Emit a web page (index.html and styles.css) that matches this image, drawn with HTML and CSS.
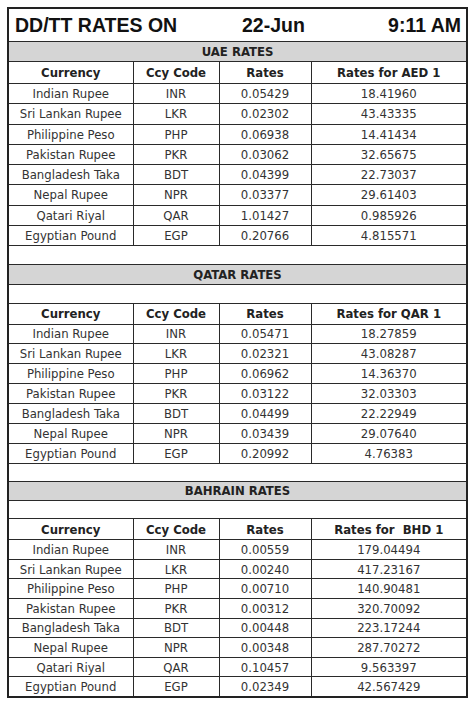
FILE: index.html
```html
<!DOCTYPE html>
<html>
<head>
<meta charset="utf-8">
<link rel="stylesheet" href="styles.css">
</head>
<body>
<table class="rates">
  <colgroup>
    <col class="c1"><col class="c2"><col class="c3"><col class="c4">
  </colgroup>
  <tbody class="top">
  <tr class="title-row">
    <td colspan="4">
      <div class="title">
        <span class="t-left">DD/TT RATES ON</span>
        <span class="t-date">22-Jun</span>
        <span class="t-time">9:11 AM</span>
      </div>
    </td>
  </tr>
  </tbody>

  <tbody class="uae">
  <tr class="sec"><td colspan="4">UAE RATES</td></tr>
  <tr class="head"><th>Currency</th><th>Ccy Code</th><th>Rates</th><th>Rates for AED 1</th></tr>
  <tr><td>Indian Rupee</td><td>INR</td><td>0.05429</td><td>18.41960</td></tr>
  <tr><td>Sri Lankan Rupee</td><td>LKR</td><td>0.02302</td><td>43.43335</td></tr>
  <tr><td>Philippine Peso</td><td>PHP</td><td>0.06938</td><td>14.41434</td></tr>
  <tr><td>Pakistan Rupee</td><td>PKR</td><td>0.03062</td><td>32.65675</td></tr>
  <tr><td>Bangladesh Taka</td><td>BDT</td><td>0.04399</td><td>22.73037</td></tr>
  <tr><td>Nepal Rupee</td><td>NPR</td><td>0.03377</td><td>29.61403</td></tr>
  <tr><td>Qatari Riyal</td><td>QAR</td><td>1.01427</td><td>0.985926</td></tr>
  <tr><td>Egyptian Pound</td><td>EGP</td><td>0.20766</td><td>4.815571</td></tr>
  <tr class="blank"><td colspan="4"></td></tr>
  </tbody>

  <tbody class="qatar">
  <tr class="sec"><td colspan="4">QATAR RATES</td></tr>
  <tr class="blank"><td colspan="4"></td></tr>
  <tr class="head"><th>Currency</th><th>Ccy Code</th><th>Rates</th><th>Rates for QAR 1</th></tr>
  <tr><td>Indian Rupee</td><td>INR</td><td>0.05471</td><td>18.27859</td></tr>
  <tr><td>Sri Lankan Rupee</td><td>LKR</td><td>0.02321</td><td>43.08287</td></tr>
  <tr><td>Philippine Peso</td><td>PHP</td><td>0.06962</td><td>14.36370</td></tr>
  <tr><td>Pakistan Rupee</td><td>PKR</td><td>0.03122</td><td>32.03303</td></tr>
  <tr><td>Bangladesh Taka</td><td>BDT</td><td>0.04499</td><td>22.22949</td></tr>
  <tr><td>Nepal Rupee</td><td>NPR</td><td>0.03439</td><td>29.07640</td></tr>
  <tr><td>Egyptian Pound</td><td>EGP</td><td>0.20992</td><td>4.76383</td></tr>
  <tr class="blank"><td colspan="4"></td></tr>
  </tbody>

  <tbody class="bahrain">
  <tr class="sec"><td colspan="4">BAHRAIN RATES</td></tr>
  <tr class="blank"><td colspan="4"></td></tr>
  <tr class="head"><th>Currency</th><th>Ccy Code</th><th>Rates</th><th>Rates for &nbsp;BHD 1</th></tr>
  <tr><td>Indian Rupee</td><td>INR</td><td>0.00559</td><td>179.04494</td></tr>
  <tr><td>Sri Lankan Rupee</td><td>LKR</td><td>0.00240</td><td>417.23167</td></tr>
  <tr><td>Philippine Peso</td><td>PHP</td><td>0.00710</td><td>140.90481</td></tr>
  <tr><td>Pakistan Rupee</td><td>PKR</td><td>0.00312</td><td>320.70092</td></tr>
  <tr><td>Bangladesh Taka</td><td>BDT</td><td>0.00448</td><td>223.17244</td></tr>
  <tr><td>Nepal Rupee</td><td>NPR</td><td>0.00348</td><td>287.70272</td></tr>
  <tr><td>Qatari Riyal</td><td>QAR</td><td>0.10457</td><td>9.563397</td></tr>
  <tr><td>Egyptian Pound</td><td>EGP</td><td>0.02349</td><td>42.567429</td></tr>
  </tbody>
</table>
</body>
</html>
```

FILE: styles.css
```css
html, body {
  margin: 0;
  padding: 0;
  background: #ffffff;
}

body {
  padding: 7px 0 0 7px;
}

.rates {
  border-collapse: collapse;
  table-layout: fixed;
  width: 459px;
  border: 2px solid #222;
  font-family: "DejaVu Sans Condensed", "DejaVu Sans", sans-serif;
  font-stretch: condensed;
  font-size: 13px;
  color: #333;
}

.c1 { width: 125px; }
.c2 { width: 86px; }
.c3 { width: 92px; }
.c4 { width: 156px; }

.rates td,
.rates th {
  border: 1px solid #2a2a2a;
  padding: 0;
  height: 19px;
  line-height: 17px;
  text-align: center;
  white-space: nowrap;
  overflow: hidden;
}

.rates th {
  font-weight: bold;
  color: #222;
  height: 20px;
}

.uae td { height: 19.25px; }
.uae th { height: 21px; }
.qatar td { height: 18.9px; }
.qatar th { height: 19.5px; }
.bahrain td { height: 18.6px; }
.bahrain th { height: 20px; }

.title-row td {
  height: 32px;
  text-align: left;
}

.title {
  display: flex;
  align-items: center;
  padding: 0 5px 0 6px;
  font-family: "Liberation Sans", Arial, sans-serif;
  font-stretch: normal;
  font-weight: bold;
  font-size: 19.5px;
  color: #111;
}

.t-left { width: 227px; }
.t-time { margin-left: auto; }

.rates .sec td {
  background: #d5d5d5;
  font-weight: bold;
  color: #222;
  height: 19px;
}

.rates .blank td {
  height: 18px;
}

.rates .qatar .blank:last-child td {
  height: 17px;
}

.rates .bahrain .sec td {
  height: 18px;
}

.rates .bahrain .blank td {
  height: 17.5px;
}
```
